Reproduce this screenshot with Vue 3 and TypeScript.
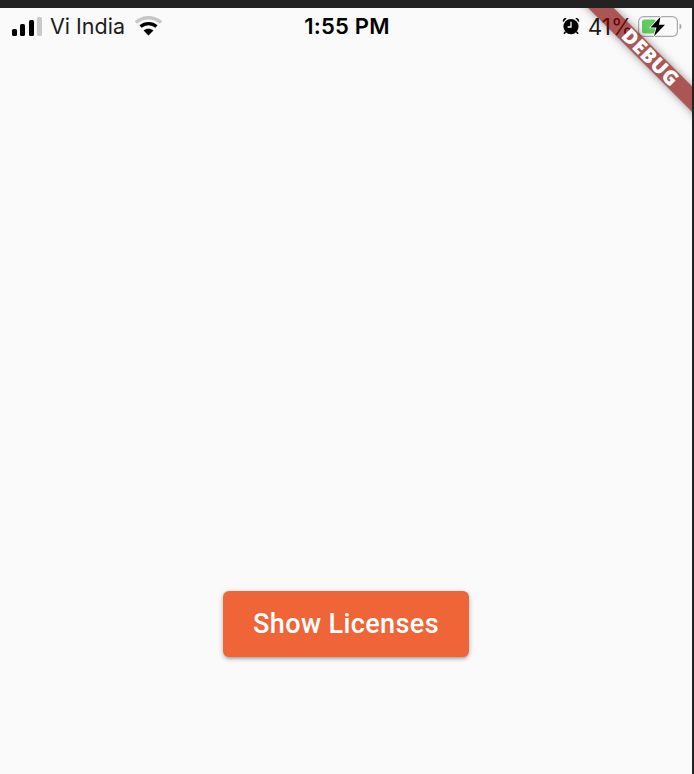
<script setup lang="ts">
const title = 'Show Licenses'
</script>

<template>
  <div class="frame">
    <div class="screen">
      <header class="status">
        <div class="side left">
          <svg class="signal" width="30" height="19" viewBox="0 0 30 19">
            <rect x="0" y="12" width="5" height="7" rx="1.5" fill="#000" />
            <rect x="8" y="7" width="5" height="12" rx="1.5" fill="#000" />
            <rect x="17" y="3" width="5" height="16" rx="1.5" fill="#000" />
            <rect x="25" y="0" width="5" height="19" rx="1.5" fill="#c9c9c9" />
          </svg>
          <span class="carrier">Vi India</span>
          <svg class="wifi" width="27" height="20" viewBox="0 0 27 20">
            <path d="M1 6.5C8 .2 19 .2 26 6.5" fill="none" stroke="#c6c6c6" stroke-width="3.6" />
            <path d="M5.5 10.5C10 6.6 17 6.6 21.5 10.5" fill="none" stroke="#000" stroke-width="3.4" />
            <path d="M13.5 19.5L8.6 14.4C11.3 12.2 15.7 12.2 18.4 14.4Z" fill="#000" />
          </svg>
        </div>
        <div class="time">1:55 PM</div>
        <div class="side right">
          <svg class="alarm" width="18" height="18" viewBox="0 0 18 18">
            <path d="M1 5.2C.2 2.8 2.2.6 4.6 1.2Z M17 5.2C17.8 2.8 15.8.6 13.4 1.2Z" fill="#000" />
            <path d="M3.6 14.6L2 16.8M14.4 14.6L16 16.8" stroke="#000" stroke-width="1.6" />
            <circle cx="9" cy="9.6" r="7.6" fill="#000" />
            <path d="M9 4.8V10H5.6" fill="none" stroke="#fff" stroke-width="1.3" />
          </svg>
          <span class="percent">41%</span>
          <svg class="battery" width="44" height="21" viewBox="0 0 44 21">
            <rect x="0.6" y="0.6" width="38.8" height="19.8" rx="5" fill="none" stroke="#a9a9a9" stroke-width="1.2" />
            <rect x="4" y="3.5" width="14" height="14" rx="2.5" fill="#5fcb62" />
            <path d="M41.5 7.5c1.4.4 2 1.6 2 3s-.6 2.600-2 3z" fill="#a9a9a9" />
            <path class="bolt" d="M22.500 0.800L12.500 11.500H18.500L16 20.200L27 8.800H21Z" />
          </svg>
        </div>
      </header>
      <main class="content">
        <button class="action" type="button">{{ title }}</button>
      </main>
      <div class="banner-clip" aria-hidden="true">
        <div class="banner">DEBUG</div>
      </div>
    </div>
  </div>
</template>

<style>
html,
body {
  margin: 0;
  background: #fafafa;
}
</style>

<style scoped>
.frame {
  width: 694px;
  height: 774px;
  box-sizing: border-box;
  border-top: 8px solid #222222;
  border-right: 2px solid #222222;
  overflow: hidden;
}
.screen {
  position: relative;
  height: 100%;
  display: flex;
  flex-direction: column;
  background: #fafafa;
}
.status {
  display: grid;
  grid-template-columns: 1fr auto 1fr;
  align-items: center;
  height: 36px;
  padding: 0 10px 0 12px;
  font-family: Inter, "Liberation Sans", sans-serif;
  color: #000;
}
.side {
  display: flex;
  align-items: center;
}
.right {
  justify-content: flex-end;
}
.carrier {
  margin-left: 8px;
  font-size: 21.500px;
  color: #1c1c1c;
}
.wifi {
  margin-left: 10px;
}
.time {
  font-size: 22px;
  font-weight: 600;
  letter-spacing: 0.2px;
}
.percent {
  margin-left: 8px;
  font-size: 22.500px;
  color: #1c1c1c;
}
.battery {
  margin-left: 5px;
}
.bolt {
  fill: #000;
  stroke: #fff;
  stroke-width: 1.5px;
  paint-order: stroke;
}
.content {
  flex: 1;
  display: flex;
  flex-direction: column;
  align-items: center;
  padding-top: 547px;
}
.action {
  width: 246px;
  height: 66px;
  border: 0;
  border-radius: 6px;
  background: #f06538;
  color: #fff;
  font-family: Roboto, "Liberation Sans", sans-serif;
  font-size: 27px;
  font-weight: 500;
  letter-spacing: 0.4px;
  box-shadow: 0 3px 3px -2px rgba(0, 0, 0, 0.2), 0 2px 4px 0 rgba(0, 0, 0, 0.16), 0 1px 6px 0 rgba(0, 0, 0, 0.12);
}
.banner-clip {
  position: absolute;
  top: 0;
  right: 0;
  width: 130px;
  height: 130px;
  overflow: hidden;
  pointer-events: none;
}
.banner {
  position: absolute;
  top: 38px;
  left: -9px;
  width: 190px;
  height: 18px;
  box-sizing: border-box;
  padding-left: 7px;
  line-height: 18px;
  text-align: center;
  transform: rotate(45deg);
  background: rgba(130, 0, 0, 0.66);
  box-shadow: 0 0 8px rgba(0, 0, 0, 0.4);
  color: #fff;
  font-family: "Open Sans", "DejaVu Sans", sans-serif;
  font-size: 20px;
  font-weight: 800;
  letter-spacing: 0.5px;
}
</style>
